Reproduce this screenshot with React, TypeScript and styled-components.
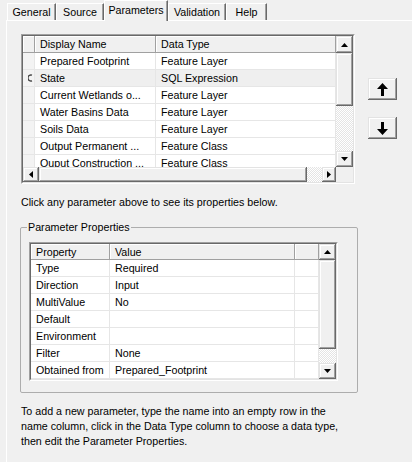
import React from "react"
import styled, { createGlobalStyle, css } from "styled-components"

const GlobalStyle = createGlobalStyle`
  html, body {
    margin: 0;
    padding: 0;
    background: #f0f0f0;
  }
  body {
    font-family: "Liberation Sans", Arial, sans-serif;
    font-size: 10.7px;
    color: #000;
  }
`

const raised = css`
  background: #f0f0f0;
  box-shadow: inset -1px -1px #696969, inset 1px 1px #e3e3e3, inset -2px -2px #a0a0a0,
    inset 2px 2px #fff;
`

const hatched = css`
  background-color: #fff;
  background-image: repeating-conic-gradient(#e4e4e4 0 25%, #fff 0 50%);
  background-size: 2px 2px;
`

const Window = styled.div`
  width: 412px;
  height: 462px;
  overflow: hidden;
  background: #f0f0f0;
`

const TabStrip = styled.div`
  display: flex;
  align-items: flex-end;
  height: 20px;
  padding-left: 7px;
  position: relative;
  z-index: 1;
`

const Tab = styled.div<{ $active?: boolean; $w: number }>`
  box-sizing: border-box;
  width: ${p => p.$w}px;
  height: 17px;
  padding-top: 2px;
  text-align: center;
  line-height: 13px;
  white-space: nowrap;
  background: #f0f0f0;
  border-top: 1px solid #fff;
  border-left: 1px solid #fff;
  border-right: 1px solid #696969;
  box-shadow: inset -1px 0 #a0a0a0;

  ${p =>
    p.$active &&
    css`
      height: 21px;
      margin-bottom: -1px;
      padding-top: 3px;
      position: relative;
      z-index: 2;
    `}
`

const Panel = styled.div`
  box-sizing: border-box;
  height: 442px;
  margin-left: 6px;
  padding: 13px 0 0 14px;
  border-top: 1px solid #fff;
  border-left: 1px solid #fff;
`

const TopArea = styled.div`
  display: flex;
  gap: 13px;
`

const ButtonColumn = styled.div`
  display: flex;
  flex-direction: column;
  gap: 17px;
  padding-top: 44px;
`

const MoveButton = styled.div`
  ${raised};
  width: 29px;
  height: 22px;
  display: flex;
  align-items: center;
  justify-content: center;
`

const Sunken = styled.div<{ $w: number; $h: number }>`
  box-sizing: border-box;
  width: ${p => p.$w}px;
  height: ${p => p.$h}px;
  flex: none;
  border: 1px solid;
  border-color: #a0a0a0 #fff #fff #a0a0a0;
`

const GridBody = styled.div<{ $rows: string }>`
  box-sizing: border-box;
  height: 100%;
  border: 1px solid;
  border-color: #696969 #e3e3e3 #e3e3e3 #696969;
  background: #fff;
  display: grid;
  grid-template-columns: 1fr 17px;
  grid-template-rows: ${p => p.$rows};
  overflow: hidden;
`

const DataArea = styled.div`
  display: flex;
  flex-direction: column;
  overflow: hidden;
  min-width: 0;
`

const Row = styled.div<{ $cols: string; $h?: number; $selected?: boolean }>`
  display: grid;
  grid-template-columns: ${p => p.$cols};
  height: ${p => p.$h ?? 17}px;
  flex: none;
  background: ${p => (p.$selected ? "#efefef" : "#fff")};
`

const HeaderCell = styled.div`
  box-sizing: border-box;
  background: #f0f0f0;
  border-right: 1px solid #a0a0a0;
  border-bottom: 1px solid #a0a0a0;
  box-shadow: inset 1px 1px #fff;
  padding-left: 5px;
  line-height: 16px;
  white-space: nowrap;
  overflow: hidden;
`

const Cell = styled.div`
  box-sizing: border-box;
  border-right: 1px solid #e6e6e6;
  border-bottom: 1px solid #e6e6e6;
  padding-left: 5px;
  line-height: 16px;
  white-space: nowrap;
  overflow: hidden;
`

const SelectorCell = styled(Cell)`
  background: #f3f3f3;
  padding: 0 0 0 5px;
  display: flex;
  align-items: center;
`

const ScrollBar = styled.div<{ $vertical?: boolean }>`
  display: flex;
  flex-direction: ${p => (p.$vertical ? "column" : "row")};
  min-width: 0;
  min-height: 0;
`

const ScrollButton = styled.div<{ $size: number; $vertical?: boolean }>`
  ${raised};
  flex: none;
  ${p => (p.$vertical ? `height: ${p.$size}px;` : `width: ${p.$size}px;`)}
  display: flex;
  align-items: center;
  justify-content: center;
`

const Thumb = styled.div<{ $size: number; $vertical?: boolean }>`
  ${raised};
  flex: none;
  ${p => (p.$vertical ? `height: ${p.$size}px;` : `width: ${p.$size}px;`)}
`

const Track = styled.div`
  ${hatched};
  flex: 1;
`

const Corner = styled.div`
  background: #f0f0f0;
`

const Hint = styled.div`
  margin-top: 12px;
  line-height: 13px;
  white-space: nowrap;
`

const GroupBox = styled.fieldset`
  box-sizing: border-box;
  width: 338px;
  margin: 12px 0 0 -1px;
  padding: 8px 18px 11px 8px;
  border: 1px solid #adadad;
  border-radius: 2px;
  min-width: 0;
`

const GroupLabel = styled.legend`
  padding: 0 1px;
  margin-left: -2px;
  line-height: 13px;
`

const Note = styled.div`
  margin-top: 11px;
  line-height: 15px;
  white-space: nowrap;
`

type Dir = "up" | "down" | "left" | "right"

const Arrow = ({ dir }: { dir: Dir }) => {
  const pts = {
    up: "0,4 7,4 3.5,0",
    down: "0,0 7,0 3.5,4",
    left: "4,0 4,7 0,3.5",
    right: "0,0 0,7 4,3.5",
  }[dir]
  const vertical = dir === "up" || dir === "down"
  return (
    <svg width={vertical ? 7 : 4} height={vertical ? 4 : 7} viewBox={vertical ? "0 0 7 4" : "0 0 4 7"}>
      <polygon points={pts} fill="#000" />
    </svg>
  )
}

const BigArrow = ({ down }: { down?: boolean }) => (
  <svg width="11" height="13" viewBox="0 0 11 13" style={down ? { transform: "rotate(180deg)" } : undefined}>
    <path d="M5.5 0 L11 6 L7 6 L7 13 L4 13 L4 6 L0 6 Z" fill="#000" />
  </svg>
)

const EditMark = () => (
  <svg width="5" height="8" viewBox="0 0 5 8">
    <path d="M4 1.2 A3 3 0 1 0 4 6.8" stroke="#444" strokeWidth="1.4" fill="none" />
  </svg>
)

const params = [
  ["Prepared Footprint", "Feature Layer"],
  ["State", "SQL Expression"],
  ["Current Wetlands o...", "Feature Layer"],
  ["Water Basins Data", "Feature Layer"],
  ["Soils Data", "Feature Layer"],
  ["Output Permanent ...", "Feature Class"],
  ["Ouput Construction ...", "Feature Class"],
]

const properties = [
  ["Type", "Required"],
  ["Direction", "Input"],
  ["MultiValue", "No"],
  ["Default", ""],
  ["Environment", ""],
  ["Filter", "None"],
  ["Obtained from", "Prepared_Footprint"],
]

const paramCols = "12px 121px 1fr"
const propCols = "79px 185px 1fr"

const tabs: [string, number][] = [
  ["General", 49],
  ["Source", 48],
  ["Parameters", 64],
  ["Validation", 58],
  ["Help", 41],
]

export default function App() {
  return (
    <Window>
      <GlobalStyle />
      <TabStrip>
        {tabs.map(([t, w]) => (
          <Tab key={t} $w={w} $active={t === "Parameters"}>
            {t}
          </Tab>
        ))}
      </TabStrip>
      <Panel>
        <TopArea>
          <Sunken $w={334} $h={150}>
            <GridBody $rows="1fr 15px">
              <DataArea>
                <Row $cols={paramCols}>
                  <HeaderCell />
                  <HeaderCell>Display Name</HeaderCell>
                  <HeaderCell>Data Type</HeaderCell>
                </Row>
                {params.map(([name, type]) => (
                  <Row key={name} $cols={paramCols} $selected={name === "State"}>
                    <SelectorCell>{name === "State" && <EditMark />}</SelectorCell>
                    <Cell>{name}</Cell>
                    <Cell>{type}</Cell>
                  </Row>
                ))}
              </DataArea>
              <ScrollBar $vertical>
                <ScrollButton $vertical $size={17}>
                  <Arrow dir="up" />
                </ScrollButton>
                <Thumb $vertical $size={53} />
                <Track />
                <ScrollButton $vertical $size={16}>
                  <Arrow dir="down" />
                </ScrollButton>
              </ScrollBar>
              <ScrollBar>
                <ScrollButton $size={16}>
                  <Arrow dir="left" />
                </ScrollButton>
                <Thumb $size={268} />
                <Track />
                <ScrollButton $size={14}>
                  <Arrow dir="right" />
                </ScrollButton>
              </ScrollBar>
              <Corner />
            </GridBody>
          </Sunken>
          <ButtonColumn>
            <MoveButton>
              <BigArrow />
            </MoveButton>
            <MoveButton>
              <BigArrow down />
            </MoveButton>
          </ButtonColumn>
        </TopArea>

        <Hint>Click any parameter above to see its properties below.</Hint>

        <GroupBox>
          <GroupLabel>Parameter Properties</GroupLabel>
          <Sunken $w={309} $h={139}>
            <GridBody $rows="1fr">
              <DataArea>
                <Row $cols={propCols} $h={16}>
                  <HeaderCell>Property</HeaderCell>
                  <HeaderCell>Value</HeaderCell>
                  <HeaderCell />
                </Row>
                {properties.map(([prop, value]) => (
                  <Row key={prop} $cols={propCols}>
                    <Cell>{prop}</Cell>
                    <Cell>{value}</Cell>
                    <Cell />
                  </Row>
                ))}
              </DataArea>
              <ScrollBar $vertical>
                <ScrollButton $vertical $size={16}>
                  <Arrow dir="up" />
                </ScrollButton>
                <Thumb $vertical $size={89} />
                <Track />
                <ScrollButton $vertical $size={16}>
                  <Arrow dir="down" />
                </ScrollButton>
              </ScrollBar>
            </GridBody>
          </Sunken>
        </GroupBox>

        <Note>
          To add a new parameter, type the name into an empty row in the
          <br />
          name column, click in the Data Type column to choose a data type,
          <br />
          then edit the Parameter Properties.
        </Note>
      </Panel>
    </Window>
  )
}
